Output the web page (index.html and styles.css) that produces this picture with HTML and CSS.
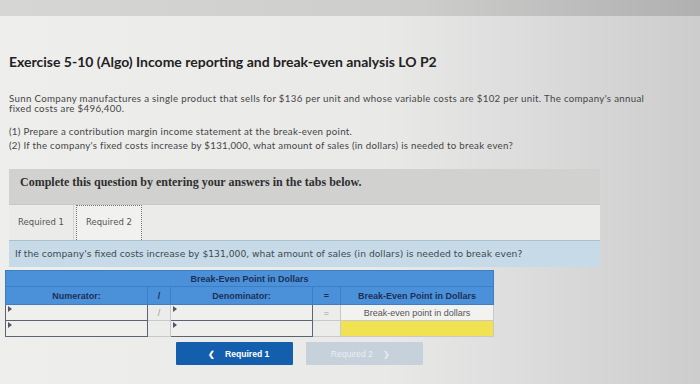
FILE: index.html
```html
<!DOCTYPE html>
<html lang="en">
<head>
    <meta charset="UTF-8">
    <title>Exercise 5-10 (Algo)</title>
    <link rel="stylesheet" href="styles.css">
</head>
<body>
    <div class="topbar"></div>

    <div class="page">
        <h1>Exercise 5-10 (Algo) Income reporting and break-even analysis LO P2</h1>

        <p class="intro">Sunn Company manufactures a single product that sells for $136 per unit and whose variable costs are $102 per unit. The company's annual fixed costs are $496,400.</p>

        <p class="steps">(1) Prepare a contribution margin income statement at the break-even point.<br>
        (2) If the company's fixed costs increase by $131,000, what amount of sales (in dollars) is needed to break even?</p>

        <div class="panel">
            <div class="panel-head">Complete this question by entering your answers in the tabs below.</div>

            <div class="tabs">
                <div class="tab">Required 1</div>
                <div class="tab active">Required 2</div>
            </div>

            <div class="question">If the company's fixed costs increase by $131,000, what amount of sales (in dollars) is needed to break even?</div>
        </div>

        <table class="calc">
            <tr class="head">
                <th colspan="5">Break-Even Point in Dollars</th>
            </tr>
            <tr class="head">
                <th class="c-num">Numerator:</th>
                <th class="c-op">/</th>
                <th class="c-num">Denominator:</th>
                <th class="c-eq">=</th>
                <th class="c-res">Break-Even Point in Dollars</th>
            </tr>
            <tr>
                <td class="input"><span class="mark"></span></td>
                <td class="op">/</td>
                <td class="input"><span class="mark"></span></td>
                <td class="op">=</td>
                <td class="label">Break-even point in dollars</td>
            </tr>
            <tr>
                <td class="input"><span class="mark"></span></td>
                <td class="op"></td>
                <td class="input"><span class="mark"></span></td>
                <td class="op"></td>
                <td class="answer"></td>
            </tr>
        </table>

        <div class="nav">
            <button type="button" class="btn prev"><span class="chev">&#10094;</span> Required 1</button>
            <button type="button" class="btn next">Required 2 <span class="chev">&#10095;</span></button>
        </div>
    </div>
</body>
</html>
```

FILE: styles.css
```css
body {
    margin: 0;
    padding: 0;
    height: 384px;
    overflow: hidden;
    font-family: 'Lato', sans-serif;
    color: #3a3a3a;
    background: linear-gradient(to right, #eeeeed 0%, #e9e9e8 55%, #d6d6d6 85%, #cdcdcd 100%);
}

.topbar {
    height: 16px;
    background: linear-gradient(to right, #d6d6d5, #cdcdcc 60%, #b0b0b0);
}

.page {
    padding: 0 0 0 9px;
}

h1 {
    margin: 37px 0 0;
    font-size: 14px;
    font-weight: bold;
    color: #222;
    line-height: 18px;
}

.intro {
    margin: 23px 0 0;
    width: 648px;
    font-size: 9.7px;
    letter-spacing: 0.32px;
    line-height: 9.5px;
    color: #454545;
}

.steps {
    margin: 11px 0 0;
    font-size: 9.7px;
    letter-spacing: 0.28px;
    line-height: 14px;
    color: #454545;
}

.panel {
    width: 591px;
    margin-top: 17px;
}

.panel-head {
    background: #d1d1d0;
    height: 35px;
    padding: 0 0 0 11px;
    line-height: 27px;
    font-family: 'Liberation Serif', serif;
    font-weight: bold;
    font-size: 12px;
    color: #2f2f2f;
}

.tabs {
    display: flex;
    height: 35px;
    border-top: 1px solid #c8c8c8;
    background: #ebebea;
}

.tab {
    font-family: 'DejaVu Sans', sans-serif;
    font-size: 8.5px;
    color: #555;
    padding: 12px 9px 0 9px;
    border-right: 1px solid #d4d4d4;
}

.tab.active {
    margin-left: 2px;
    background: #f1f1f0;
    border: 1px dotted #777;
    border-bottom: none;
    padding-top: 11px;
}

.question {
    background: #c6dae7;
    border-top: 1px solid #a9bfcd;
    height: 26px;
    line-height: 26px;
    padding-left: 6px;
    font-family: 'DejaVu Sans', sans-serif;
    font-size: 9.2px;
    color: #404a52;
}

.calc {
    margin: 3px 0 0 -4px;
    border-collapse: collapse;
    font-family: 'Liberation Sans', sans-serif;
    font-size: 9px;
}

.calc th {
    background: #4a91da;
    color: #1e2f55;
    font-weight: bold;
    height: 15px;
    padding: 0;
    border: 1px solid #3d7fc4;
}

.calc tr.head:nth-child(2) th {
    height: 17px;
}

.c-num {
    width: 141px;
}

.c-op {
    width: 22px;
}

.c-eq {
    width: 27px;
}

.c-res {
    width: 152px;
}

.calc td {
    height: 15px;
    padding: 0;
    border: 1px solid #c9c9c9;
    background: #ececeb;
    text-align: center;
    color: #9a9a9a;
}

.calc td.input {
    position: relative;
    border: 1.5px solid #5b6470;
    background: #efefee;
}

.mark {
    position: absolute;
    left: 2px;
    top: 1px;
    width: 0;
    height: 0;
    border-top: 3px solid transparent;
    border-bottom: 3px solid transparent;
    border-left: 4px solid #556;
}

.calc td.label {
    color: #555;
    background: #f2f2f1;
}

.calc td.answer {
    background: #f1e251;
}

.nav {
    display: flex;
    gap: 13px;
    margin: 5px 0 0 167px;
}

.btn {
    width: 117px;
    height: 23px;
    border: none;
    border-radius: 1px;
    font-family: 'Liberation Sans', sans-serif;
    font-weight: bold;
    font-size: 8.6px;
    color: #fff;
    padding: 0;
}

.btn .chev {
    font-size: 8px;
    margin: 0 8px;
}

.prev {
    background: #135fae;
}

.next {
    background: #c6d1dc;
    color: #e9eef3;
    font-weight: normal;
}
```
